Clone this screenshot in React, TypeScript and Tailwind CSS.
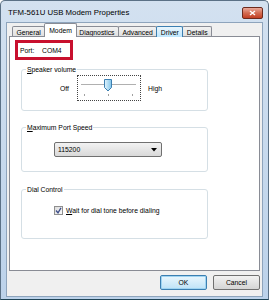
import React from "react";

const tabs = ["General", "Modem", "Diagnostics", "Advanced", "Driver", "Details"];

const Tab: React.FC<{ label: string }> = ({ label }) => {
  if (label === "Modem") {
    return (
      <div className="h-[14px] px-[4px] -mx-[1px] z-10 flex items-start pt-[2px] bg-white border border-b-0 border-[#898c95] rounded-t-[2px]">
        {label}
      </div>
    );
  }
  const hover = label === "Driver";
  return (
    <div
      className={
        "h-[11px] px-[3.5px] flex items-center border border-b-0 rounded-t-[2px] -ml-[1px] first:ml-0 " +
        (hover
          ? "bg-gradient-to-b from-[#eaf6fd] to-[#bee6fd] border-[#3c7fb1] z-[5]"
          : "bg-gradient-to-b from-[#f2f2f2] to-[#dedede] border-[#898c95]")
      }
    >
      {label}
    </div>
  );
};

const Slider: React.FC = () => (
  <div className="w-[64px] h-[26px] border border-dotted border-[#444]">
    <svg width="62" height="24" viewBox="0 0 62 24">
      <line x1="3" y1="8.5" x2="58" y2="8.5" stroke="#b0b0b0" />
      <line x1="3" y1="9.5" x2="58" y2="9.5" stroke="#ffffff" />
      <line x1="6.5" y1="18" x2="6.5" y2="20" stroke="#a0a0a0" />
      <line x1="30.5" y1="18" x2="30.5" y2="20" stroke="#a0a0a0" />
      <line x1="54.5" y1="18" x2="54.5" y2="20" stroke="#a0a0a0" />
      <defs>
        <linearGradient id="th" x1="0" y1="0" x2="1" y2="0">
          <stop offset="0" stopColor="#e3f4fc" />
          <stop offset="1" stopColor="#7fc4ea" />
        </linearGradient>
      </defs>
      <path d="M26.5 3.5 h7 v8 l-3.5 3.5 l-3.5 -3.5 z" fill="url(#th)" stroke="#3c7fb1" />
    </svg>
  </div>
);

const App: React.FC = () => {
  return (
    <div
      className="w-[269px] h-[300px] flex flex-col bg-gradient-to-b from-[#d3e1f0] to-[#bcd2ea] border border-[#5b7186] border-b-[#1f4456] rounded-t-[5px] text-black"
      style={{ fontFamily: '"Liberation Sans", Arial, sans-serif' }}
    >
      {/* Title bar */}
      <div className="h-[21px] shrink-0 flex items-center justify-between pl-[7px] pr-[5px] pt-[2px]">
        <span className="text-[7.8px]">TFM-561U USB Modem Properties</span>
        <div className="w-[21px] h-[12px] rounded-[2px] border border-[#6d2a1d] bg-gradient-to-b from-[#e9a99b] via-[#d36b51] to-[#c23e22] flex items-center justify-center">
          <svg width="7" height="6" viewBox="0 0 7 6">
            <path d="M1 1 L6 5 M6 1 L1 5" stroke="#ffffff" strokeWidth="1.4" />
          </svg>
        </div>
      </div>

      {/* Client area */}
      <div className="flex-1 mx-[5px] mb-[2px] border border-[#8ea4bc] bg-[#f0f0f0] flex flex-col text-[6.8px] leading-[9px]">
        <div className="h-[14px] pt-[1px] pl-[5px] flex items-end shrink-0">
          {tabs.map((t) => (
            <Tab key={t} label={t} />
          ))}
        </div>

        {/* Panel */}
        <div className="h-[235px] ml-[2px] mr-[2px] -mt-[1px] bg-white border border-[#898c95] flex flex-col">
          <div className="ml-[5px] mt-[3px] w-[58px] h-[20px] border-[3px] border-[#c8102e] flex items-center pl-[2px]">
            <span className="w-[22px]">Port:</span>
            <span>COM4</span>
          </div>

          <fieldset className="ml-[11px] mt-[5px] w-[187px] h-[46px] border border-[#d5dfe5] rounded-[3px]">
            <legend className="ml-[4px] px-[1px] text-black">
              <span className="underline">S</span>peaker volume
            </legend>
            <div className="flex items-center pl-[38px] mt-[1px]">
              <span className="w-[17px]">Off</span>
              <Slider />
              <span className="ml-[7px]">High</span>
            </div>
          </fieldset>

          <fieldset className="ml-[11px] mt-[12px] w-[187px] h-[49px] border border-[#d5dfe5] rounded-[3px]">
            <legend className="ml-[4px] px-[1px] text-black">
              <span className="underline">M</span>aximum Port Speed
            </legend>
            <div className="ml-[32px] mt-[10px] w-[108px] h-[15px] border border-[#707070] rounded-[2px] bg-gradient-to-b from-[#f2f2f2] to-[#d9d9d9] flex items-center justify-between pl-[3px] pr-[4px]">
              <span>115200</span>
              <svg width="6" height="4" viewBox="0 0 6 4">
                <path d="M0 0 H6 L3 3.5 Z" fill="#000" />
              </svg>
            </div>
          </fieldset>

          <fieldset className="ml-[11px] mt-[13px] w-[187px] h-[54px] border border-[#d5dfe5] rounded-[3px]">
            <legend className="ml-[4px] px-[1px] text-black">Dial Control</legend>
            <div className="ml-[32px] mt-[12px] flex items-center">
              <div className="w-[9px] h-[9px] border border-[#8f8f8f] bg-gradient-to-br from-[#dcdcdc] to-[#fafafa] flex items-center justify-center">
                <svg width="7" height="7" viewBox="0 0 7 7">
                  <path d="M1 3.5 L3 5.8 L6 0.8" fill="none" stroke="#3f4f8a" strokeWidth="1.3" />
                </svg>
              </div>
              <span className="ml-[3px]">
                <span className="underline">W</span>ait for dial tone before dialing
              </span>
            </div>
          </fieldset>
        </div>

        {/* Buttons */}
        <div className="mt-[4px] mr-[2px] flex justify-end gap-[6px]">
          <button className="w-[47px] h-[15px] rounded-[2px] border border-[#3c7fb1] bg-gradient-to-b from-[#eaf6fd] to-[#bfe3f7] shadow-[inset_0_0_0_1px_#9fd4f2]">
            OK
          </button>
          <button className="w-[47px] h-[15px] rounded-[2px] border border-[#707070] bg-gradient-to-b from-[#f2f2f2] to-[#d5d5d5]">
            Cancel
          </button>
        </div>
      </div>
    </div>
  );
};

export default App;
